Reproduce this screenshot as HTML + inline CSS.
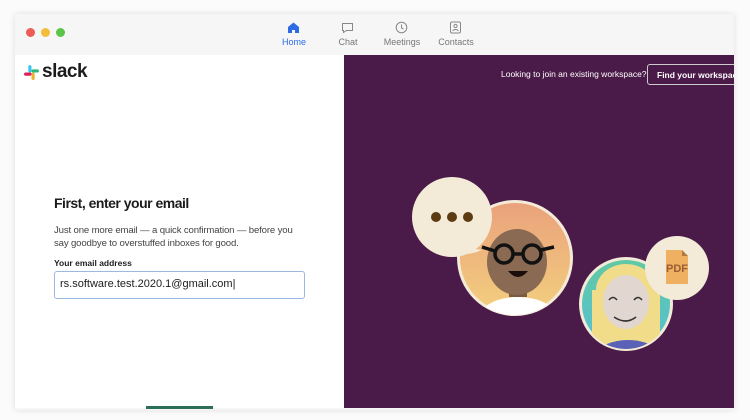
<!DOCTYPE html>
<html><head><style>
*{margin:0;padding:0;box-sizing:border-box}
body{width:750px;height:420px;background:#fbfbfb;font-family:"Liberation Sans",sans-serif;position:relative;overflow:hidden}
.win{position:absolute;left:15px;top:14px;width:719px;height:396px;background:#f6f6f6;box-shadow:0 0 6px rgba(0,0,0,.12)}
.dot{position:absolute;top:28px;width:9px;height:9px;border-radius:50%}
.tab{position:absolute;top:37px;font-size:9px;color:#777;text-align:center;width:60px}
.left{position:absolute;left:15px;top:55px;width:329px;height:353px;background:#fff}
.right{position:absolute;left:344px;top:55px;width:390px;height:353px;background:#4a1a48;overflow:hidden}
</style></head><body>
<div class="win"></div>
<div class="dot" style="left:26px;background:#ed5c56"></div>
<div class="dot" style="left:41px;background:#f3bd3c"></div>
<div class="dot" style="left:56px;background:#5dc44a"></div>
<svg style="position:absolute;left:287px;top:21px" width="13" height="13" viewBox="0 0 13 13"><path d="M1 6L6.5 1.5 12 6V12H8V9H5V12H1Z" fill="#2d6be4"/></svg>
<svg style="position:absolute;left:341px;top:22px" width="13" height="12" viewBox="0 0 13 12"><path d="M1.5 1.5h10v7h-6l-3 2v-2h-1z" fill="none" stroke="#888" stroke-width="1"/></svg>
<svg style="position:absolute;left:395px;top:21px" width="13" height="13" viewBox="0 0 13 13"><circle cx="6.5" cy="6.5" r="5.3" fill="none" stroke="#888"/><path d="M6.5 3.5v3.5l2 1" fill="none" stroke="#888"/></svg>
<svg style="position:absolute;left:449px;top:21px" width="13" height="13" viewBox="0 0 13 13"><rect x="1.5" y="1" width="10" height="11" rx="1.5" fill="none" stroke="#888"/><circle cx="6.5" cy="5" r="1.6" fill="none" stroke="#888"/><path d="M3.8 10c.5-2 4.9-2 5.4 0" fill="none" stroke="#888"/></svg>
<div class="tab" style="left:264px;color:#2d6be4">Home</div>
<div class="tab" style="left:318px">Chat</div>
<div class="tab" style="left:372px">Meetings</div>
<div class="tab" style="left:426px">Contacts</div>
<div class="left">
<svg style="position:absolute;left:8px;top:9px" width="17" height="17" viewBox="0 0 16 16"><rect x="5" y="1" width="3" height="7" rx="1.5" fill="#36c5f0"/><rect x="8" y="5" width="7" height="3" rx="1.5" fill="#2eb67d"/><rect x="8" y="8" width="3" height="7" rx="1.5" fill="#ecb22e"/><rect x="1" y="8" width="7" height="3" rx="1.5" fill="#e01e5a"/></svg>
<div style="position:absolute;left:27px;top:6px;font-size:19px;font-weight:bold;color:#1d1c1d;letter-spacing:-.5px">slack</div>
<div style="position:absolute;left:39px;top:140px;font-size:14px;font-weight:bold;color:#1d1c1d;letter-spacing:-.5px">First, enter your email</div>
<div style="position:absolute;left:39px;top:169px;font-size:9.6px;color:#444;line-height:13px;width:245px;letter-spacing:-.15px">Just one more email — a quick confirmation — before you say goodbye to overstuffed inboxes for good.</div>
<div style="position:absolute;left:39px;top:203px;font-size:8.5px;font-weight:bold;color:#1d1c1d">Your email address</div>
<div style="position:absolute;left:39px;top:216px;width:251px;height:28px;border:1.5px solid #9bb8e0;border-radius:3px;font-size:11px;color:#1d1c1d;padding:6px 5px">rs.software.test.2020.1@gmail.com|</div>
<div style="position:absolute;left:131px;top:351px;width:67px;height:3px;background:#2c6e5a"></div>
</div>
<div class="right">
<div style="position:absolute;left:157px;top:14px;font-size:8.5px;color:#fff">Looking to join an existing workspace?</div>
<div style="position:absolute;left:303px;top:9px;width:100px;height:21px;border:1px solid #ccc;border-radius:3px;font-size:8.5px;font-weight:bold;color:#fff;padding:5px 9px;white-space:nowrap">Find your workspace</div>
<svg style="position:absolute;left:0;top:0" width="390" height="353">
<defs><linearGradient id="o" x1="0" y1="0" x2="0" y2="1"><stop offset="0" stop-color="#eaa27c"/><stop offset="1" stop-color="#f3cf7e"/></linearGradient>
<linearGradient id="g" x1="0" y1="0" x2="0" y2="1"><stop offset="0" stop-color="#62c9a4"/><stop offset="1" stop-color="#54bfd4"/></linearGradient>
<clipPath id="c1"><circle cx="171" cy="203" r="57"/></clipPath><clipPath id="c2"><circle cx="282" cy="249" r="45"/></clipPath></defs>
<circle cx="171" cy="203" r="58" fill="#f3ead8"/><circle cx="171" cy="203" r="55" fill="url(#o)"/>
<g clip-path="url(#c1)"><ellipse cx="174" cy="262" rx="38" ry="20" fill="#fff"/><rect x="165" y="222" width="18" height="20" fill="#7b5b44"/><ellipse cx="173" cy="207" rx="30" ry="33" fill="#8a6a52"/>
<circle cx="160" cy="199" r="9" fill="none" stroke="#111" stroke-width="3.5"/><circle cx="188" cy="199" r="9" fill="none" stroke="#111" stroke-width="3.5"/><path d="M138 192l13 4M197 195l13-3M169 199h10" stroke="#111" stroke-width="3.5"/>
<path d="M164 216q10 12 20 0z" fill="#1a0d0a"/></g>
<path d="M108 190q6 15 30 5z" fill="#f3ead8"/>
<circle cx="108" cy="162" r="40" fill="#f3ead8"/>
<circle cx="92" cy="162" r="5" fill="#5c3a12"/><circle cx="108" cy="162" r="5" fill="#5c3a12"/><circle cx="124" cy="162" r="5" fill="#5c3a12"/>
<circle cx="282" cy="249" r="47" fill="#f3ead8"/><circle cx="282" cy="249" r="44" fill="url(#g)"/>
<g clip-path="url(#c2)"><rect x="248" y="235" width="68" height="60" fill="#f1dc8a"/><ellipse cx="282" cy="235" rx="30" ry="26" fill="#f1dc8a"/><ellipse cx="284" cy="299" rx="30" ry="14" fill="#5a62b8"/><ellipse cx="282" cy="247" rx="23" ry="27" fill="#e2d6d0"/>
<path d="M265 245q4-5 8 0M290 245q4-5 8 0M270 262q12 8 22 0" fill="none" stroke="#333" stroke-width="1.6"/></g>
<circle cx="333" cy="213" r="32" fill="#f3ead8"/>
<path d="M322 195h16l6 6v28h-22z" fill="#f0b062"/><path d="M338 195v6h6z" fill="#b07a40"/>
<text x="333" y="217" font-size="11" font-weight="bold" fill="#9a5e34" text-anchor="middle" font-family="Liberation Sans">PDF</text>
</svg>
</div>
</body></html>
